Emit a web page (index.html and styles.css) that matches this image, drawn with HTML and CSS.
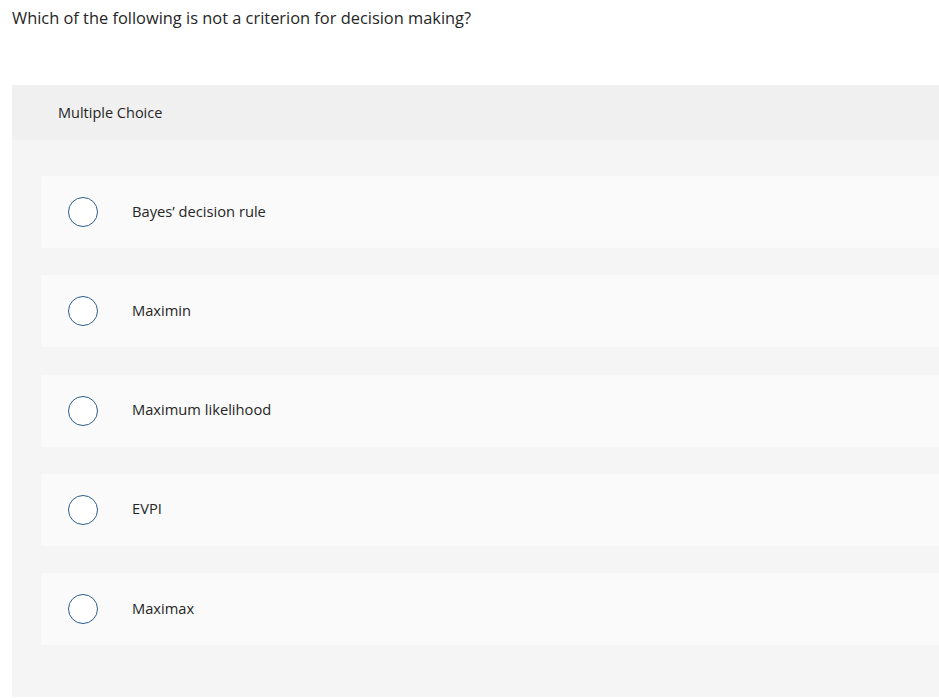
FILE: index.html
```html
<!DOCTYPE html>
<html>
<head>
<meta charset="utf-8">
<link rel="stylesheet" href="styles.css">
</head>
<body>
<p class="question">Which of the following is not a criterion for decision making?</p>
<section class="panel">
  <div class="panel-head">Multiple Choice</div>
  <div class="panel-body">
    <div class="option"><span class="radio"></span><span class="label">Bayes’ decision rule</span></div>
    <div class="option"><span class="radio"></span><span class="label">Maximin</span></div>
    <div class="option"><span class="radio"></span><span class="label">Maximum likelihood</span></div>
    <div class="option"><span class="radio"></span><span class="label">EVPI</span></div>
    <div class="option"><span class="radio"></span><span class="label">Maximax</span></div>
  </div>
</section>
</body>
</html>
```
FILE: styles.css
```css
html, body {
  margin: 0;
  padding: 0;
  background: #ffffff;
}
body {
  font-family: "Open Sans", Lato, sans-serif;
  color: #262626;
  overflow: hidden;
}
.question {
  margin: 8px 0 0 12px;
  font-size: 16.4px;
  line-height: 20px;
  height: 20px;
}
.panel {
  margin: 57px 0 0 12px;
  height: 612px;
  background: #f5f5f5;
  display: flex;
  flex-direction: column;
}
.panel-head {
  height: 55px;
  background: #f0f0f0;
  display: flex;
  align-items: center;
  padding-left: 46px;
  font-size: 14.5px;
}
.panel-body {
  padding: 36px 0 0 29px;
  display: flex;
  flex-direction: column;
  gap: 27.25px;
}
.option {
  height: 72px;
  background: #fafafa;
  border-radius: 3px 0 0 3px;
  display: flex;
  align-items: center;
}
.radio {
  width: 28px;
  height: 28px;
  margin-left: 27px;
  border: 1.5px solid #2b5d8f;
  border-radius: 50%;
  background: #ffffff;
  flex: none;
}
.label {
  margin-left: 34px;
  font-size: 14.7px;
  line-height: 18px;
  padding-bottom: 3px;
}
```
